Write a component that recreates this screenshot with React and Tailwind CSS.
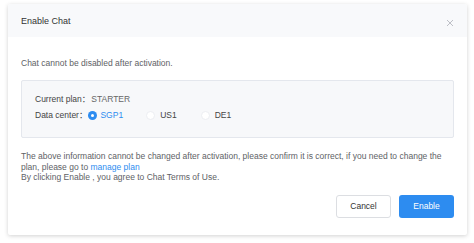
export default function App() {
  const font = { fontFamily: '"Liberation Sans", "Noto Sans CJK SC", Arial, sans-serif' };
  return (
    <div className="w-[474px] h-[243px] bg-white pt-[4px] pl-[8px]" style={font}>
      <div className="w-[459px] h-[231px] bg-white rounded-[2px] shadow-[0_1px_4px_rgba(0,0,0,0.18)] flex flex-col">
        <div className="h-[33px] bg-[#f8f9fb] flex items-center justify-between pl-[13px] pr-[13px] pt-[3px] rounded-t-[2px]">
          <span className="text-[9px] text-[#333]">Enable Chat</span>
          <svg width="8" height="8" viewBox="0 0 8 8" className="mt-[1px]">
            <path d="M1 1L7 7M7 1L1 7" stroke="#b5b8bf" strokeWidth="0.9" />
          </svg>
        </div>
        <div className="px-[13px] flex flex-col text-[8.5px] text-[#606266]">
          <div className="mt-[21px] leading-[11px]">Chat cannot be disabled after activation.</div>
          <div className="mt-[11px] h-[58px] bg-[#f7f8fa] border border-[#e4e7ed] rounded-[2px] pl-[13px] pt-[10px] flex flex-col">
            <div className="h-[16px] flex items-center">
              <span className="text-[#444]">Current plan：</span>
              <span className="ml-[1px] text-[#666]">STARTER</span>
            </div>
            <div className="h-[16px] flex items-center">
              <span className="text-[#444]">Data center：</span>
              <div className="ml-[1px] flex items-center">
                <span className="w-[9px] h-[9px] rounded-full bg-[#2d8cf0] flex items-center justify-center">
                  <span className="w-[3px] h-[3px] rounded-full bg-white" />
                </span>
                <span className="ml-[3px] text-[#2d8cf0]">SGP1</span>
              </div>
              <div className="ml-[23px] flex items-center">
                <span className="w-[9px] h-[9px] rounded-full bg-white border border-[#eceef2]" />
                <span className="ml-[5px] text-[#444]">US1</span>
              </div>
              <div className="ml-[24px] flex items-center">
                <span className="w-[9px] h-[9px] rounded-full bg-white border border-[#eceef2]" />
                <span className="ml-[5px] text-[#444]">DE1</span>
              </div>
            </div>
          </div>
          <div className="mt-[13px] leading-[10.5px]">
            The above information cannot be changed after activation, please confirm it is correct, if you need to change the plan, please go to <span className="text-[#2d8cf0]">manage plan</span>
            <br />
            By clicking Enable , you agree to Chat Terms of Use.
          </div>
          <div className="mt-[12px] flex justify-end gap-[8px]">
            <button className="w-[55px] h-[23px] bg-white border border-[#dcdee2] rounded-[3px] text-[8.5px] text-[#333]">Cancel</button>
            <button className="w-[55px] h-[23px] bg-[#2d8cf0] rounded-[3px] text-[8.5px] text-white">Enable</button>
          </div>
        </div>
      </div>
    </div>
  );
}
